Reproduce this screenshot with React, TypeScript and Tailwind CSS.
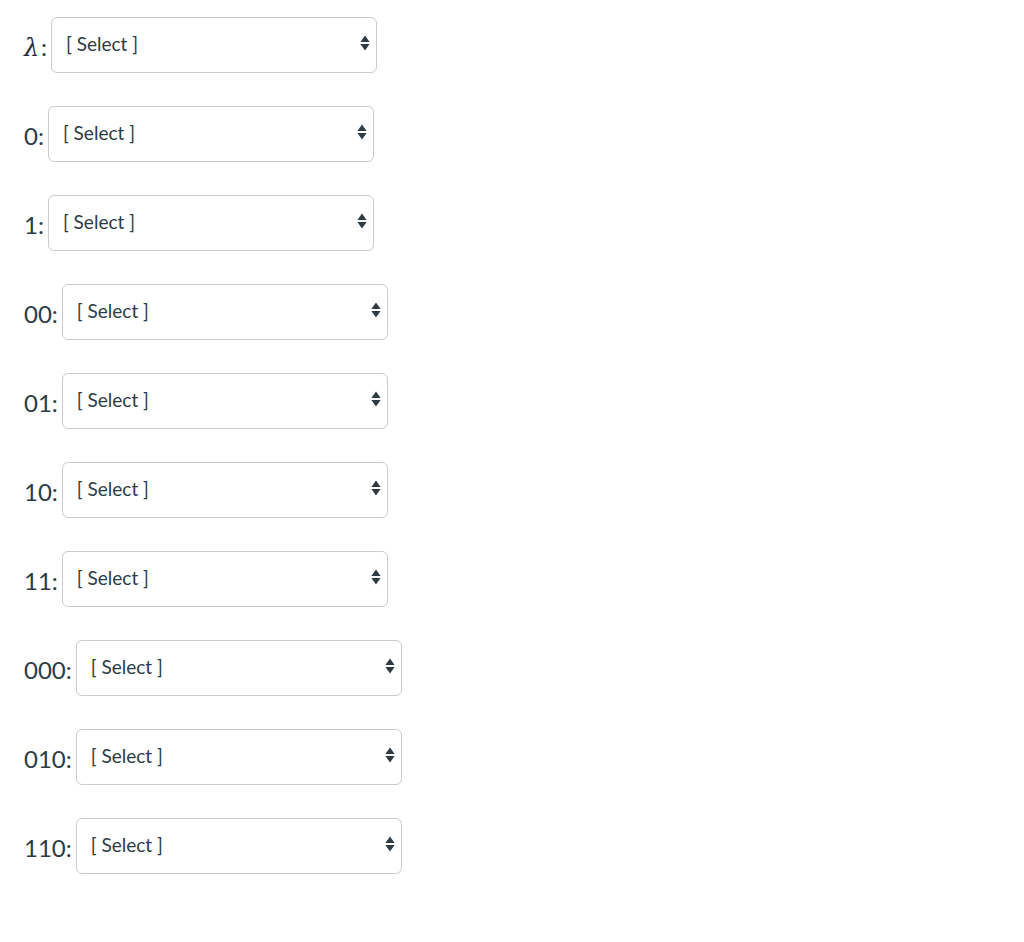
const labels = ['λ', '0', '1', '00', '01', '10', '11', '000', '010', '110'];

function SortArrows() {
  return (
    <svg width="10" height="16" viewBox="0 0 10 16" className="block shrink-0">
      <path d="M5 0.5 L9.6 7 H0.4 Z" fill="#2d3b45" />
      <path d="M5 15.5 L9.6 9 H0.4 Z" fill="#2d3b45" />
    </svg>
  );
}

function FakeSelect() {
  return (
    <div className="flex h-[56px] w-[326px] shrink-0 items-start justify-between rounded-[6px] border border-[#c7cdd1] bg-white pl-[14px] pr-[6px]">
      <span className="pt-[14px] text-[19px] leading-[24px] text-[#2d3b45]">[ Select ]</span>
      <span className="pt-[17px]">
        <SortArrows />
      </span>
    </div>
  );
}

export default function App() {
  return (
    <div
      className="min-h-[942px] bg-white pl-[24px] pt-[17px] text-[#2d3b45]"
      style={{ fontFamily: 'Lato, "Noto Sans", sans-serif' }}
    >
      {labels.map((label) => (
        <div key={label} className="mb-[33px] flex items-start">
          <span className="mr-[4px] whitespace-nowrap pt-[15px] text-[24px] leading-[30px]">
            {label === 'λ' ? (
              <span className="inline-block w-[17px] font-['DejaVu_Serif',serif] text-[24px] italic text-[#1f2a33]">
                λ
              </span>
            ) : (
              label
            )}
            :
          </span>
          <FakeSelect />
        </div>
      ))}
    </div>
  );
}
